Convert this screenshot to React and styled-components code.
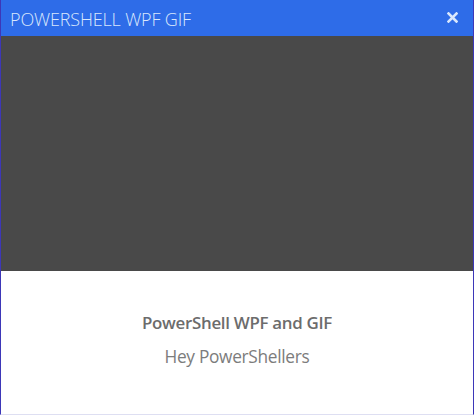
import styled, { createGlobalStyle } from "styled-components";

const GlobalStyle = createGlobalStyle`
  html, body {
    margin: 0;
    padding: 0;
    background: #ffffff;
  }
  body {
    font-family: "Open Sans", "Noto Sans", "Liberation Sans", sans-serif;
  }
`;

const Window = styled.div`
  width: 474px;
  height: 415px;
  box-sizing: border-box;
  display: flex;
  flex-direction: column;
  background: #ffffff;
  border-left: 1px solid #3d37b8;
  border-right: 1px solid #3d37b8;
  border-bottom: 1px solid #dedff2;
`;

const TitleBar = styled.div`
  height: 36px;
  flex-shrink: 0;
  display: flex;
  align-items: center;
  justify-content: space-between;
  padding: 0 14px 0 9px;
  background: #2e6ce8;
`;

const Title = styled.span`
  font-family: "Open Sans", "Noto Sans", sans-serif;
  font-weight: 300;
  font-size: 18px;
  letter-spacing: -0.15px;
  color: #d9e7fc;
  margin-top: 1px;
`;

const CloseButton = styled.button`
  border: none;
  background: none;
  padding: 0;
  width: 14px;
  height: 14px;
  display: flex;
  align-items: center;
  justify-content: center;
  cursor: pointer;
  margin-top: -1px;
`;

const Media = styled.div`
  height: 235px;
  flex-shrink: 0;
  background: #494949;
`;

const Caption = styled.div`
  flex: 1;
  display: flex;
  flex-direction: column;
  align-items: center;
  padding-top: 41px;
  gap: 12px;
`;

const Heading = styled.div`
  font-family: "Open Sans", "Noto Sans", sans-serif;
  font-weight: 600;
  font-size: 16.9px;
  line-height: 22px;
  color: #6c6c6c;
  letter-spacing: -0.3px;
`;

const SubText = styled.div`
  font-family: "Open Sans", "Noto Sans", sans-serif;
  font-weight: 400;
  font-size: 17.3px;
  line-height: 22px;
  color: #7c7c7c;
  letter-spacing: -0.3px;
`;

export default function App() {
  return (
    <>
      <GlobalStyle />
      <Window>
        <TitleBar>
          <Title>POWERSHELL WPF GIF</Title>
          <CloseButton aria-label="Close">
            <svg width="11" height="11" viewBox="0 0 11 11">
              <path
                d="M1.5 1.5 L9.5 9.5 M9.5 1.5 L1.5 9.5"
                stroke="#d9e7fc"
                strokeWidth="2.6"
                strokeLinecap="square"
              />
            </svg>
          </CloseButton>
        </TitleBar>
        <Media />
        <Caption>
          <Heading>PowerShell WPF and GIF</Heading>
          <SubText>Hey PowerShellers</SubText>
        </Caption>
      </Window>
    </>
  );
}
